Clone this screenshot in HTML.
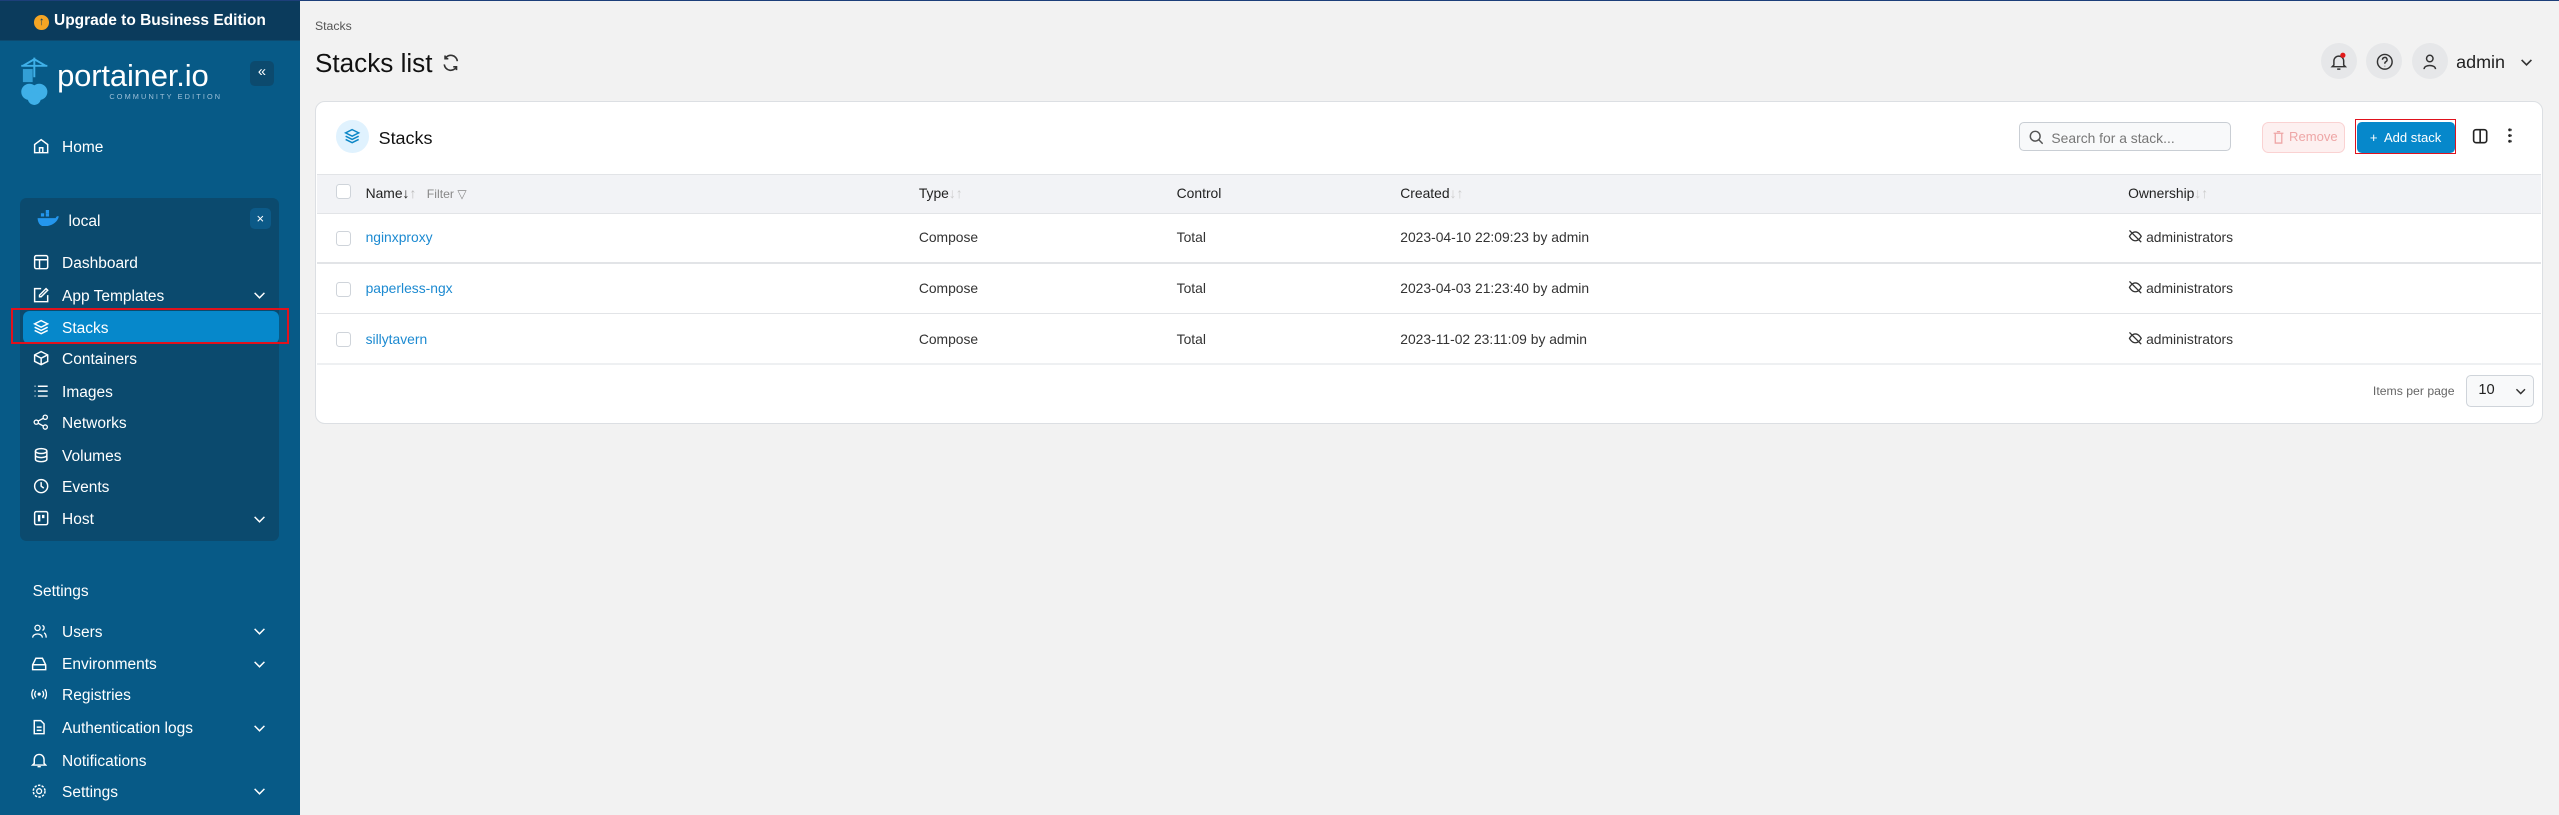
<!DOCTYPE html>
<html><head><meta charset="utf-8"><style>
html,body{margin:0;padding:0;width:2559px;height:815px;overflow:hidden;background:#f2f2f2;font-family:"Liberation Sans",sans-serif}
#w{zoom:1.632;width:1568px;height:500px;position:relative;background:#f2f2f2;border-top:1px solid #1d3f7a;box-sizing:border-box}
.a{position:absolute}
#sb{left:0;top:0;width:184px;height:500px;background:#075a87}
#up{left:0;top:0;width:184px;height:24px;background:#0b3b5c;border-bottom:1px solid #0d4a6f;color:#fff;font-size:9.5px;font-weight:bold;text-align:center;line-height:24px}
.si{position:absolute;left:38px;font-size:9.5px;color:#fff;line-height:12px}
.ic{position:absolute;width:10px;height:10px}
.chev{position:absolute;left:155px;width:8px;height:8px}
#env{left:12px;top:121px;width:159px;height:210px;background:#0b4a6e;border-radius:4px}
.card{left:193px;top:61px;width:1365px;height:198px;background:#fff;border:1px solid #dcdfe3;border-radius:6px;box-sizing:border-box}
.t{position:absolute;font-size:8.5px;color:#333;line-height:10px}
.lnk{color:#1c8ad1}
.cb{position:absolute;left:206px;width:8px;height:8px;border:1px solid #cfd4da;border-radius:2px;background:#fff}
.hr{position:absolute;left:194px;width:1363px;height:1px;background:#e2e4e7}
.circ{position:absolute;width:22px;height:22px;border-radius:50%;background:#e6e7e9}
.eo{display:inline-block;width:9px;height:9px;vertical-align:-1px;margin-right:2px}
</style></head><body><div id="w">
<div id="sb" class="a">
<div id="up" class="a"><span style="display:inline-block;width:9px;height:9px;border-radius:50%;background:#f5a524;color:#0b3b5c;font-size:7px;line-height:9px;vertical-align:0px;margin-right:3px">↑</span>Upgrade to Business Edition</div>
<svg class="a" style="left:11px;top:34px" width="22" height="30" viewBox="0 0 22 30"><path d="M10 1v12M2 6h16M10 2l-7 4M10 2l7 4" stroke="#3fb0e8" stroke-width="1.2" fill="none"/><rect x="3" y="8" width="6" height="8" fill="#3fb0e8" opacity=".8"/><circle cx="7" cy="22" r="5" fill="#3fb0e8"/><circle cx="13" cy="22" r="5" fill="#3fb0e8"/><circle cx="10" cy="26" r="4" fill="#3fb0e8"/></svg>
<div class="a" style="left:35px;top:35px;font-size:19px;color:#fff;letter-spacing:-.1px">portainer.io</div>
<div class="a" style="left:67px;top:56px;font-size:4.5px;color:#9dc0d8;letter-spacing:1.3px">COMMUNITY EDITION</div>
<div class="a" style="left:153px;top:37px;width:15px;height:15px;background:#0c4a6e;border-radius:3px;color:#fff;font-size:9px;text-align:center;line-height:14px">«</div>
<svg class="ic" style="left:20px;top:84px" viewBox="0 0 10 10"><path d="M1 9V4l4-3 4 3v5zM4 9V6h2v3" stroke="#fff" fill="none" stroke-width=".9"/></svg>
<div class="si" style="top:84px">Home</div>
<div id="env" class="a"></div>
<svg class="a" style="left:22px;top:128px" width="14" height="10" viewBox="0 0 14 10"><path d="M1 5h11c1-2 2-1 2-1-1 4-5 6-9 6-3 0-4-3-4-5z" fill="#2496ed"/><rect x="3" y="2" width="2" height="2" fill="#2496ed"/><rect x="6" y="2" width="2" height="2" fill="#2496ed"/><rect x="6" y="0" width="2" height="2" fill="#2496ed"/></svg>
<div class="si" style="top:129px;left:42px">local</div>
<div class="a" style="left:153px;top:127px;width:13px;height:13px;background:#0c5a88;border-radius:3px;color:#fff;font-size:8px;text-align:center;line-height:13px">×</div>
<div class="a" style="left:14px;top:190px;width:157px;height:20px;background:#0688cb;border-radius:4px"></div>
<div class="a" style="left:7px;top:188px;width:170px;height:22px;border:1.5px solid #e0121d;box-sizing:border-box"></div>
<svg class="ic" style="left:20px;top:155px" viewBox="0 0 10 10"><rect x="1" y="1" width="8" height="8" rx="1" stroke="#fff" fill="none" stroke-width=".9"/><path d="M1 3.5h8M4 3.5V9" stroke="#fff" stroke-width=".9"/></svg>
<div class="si" style="top:155px">Dashboard</div>
<svg class="ic" style="left:20px;top:175px" viewBox="0 0 10 10"><path d="M5 1H1v8h8V5M8 1l1 1-4 4H4V5z" stroke="#fff" fill="none" stroke-width=".9"/></svg>
<div class="si" style="top:175px">App Templates</div>
<svg class="chev" style="top:176px" viewBox="0 0 8 8"><path d="M1 3l3 3 3-3" stroke="#fff" fill="none" stroke-width=".9"/></svg>
<svg class="ic" style="left:20px;top:195px" viewBox="0 0 10 10"><path d="M5 1l4 2-4 2-4-2zM1 5l4 2 4-2M1 7l4 2 4-2" stroke="#fff" fill="none" stroke-width=".9"/></svg>
<div class="si" style="top:195px">Stacks</div>
<svg class="ic" style="left:20px;top:214px" viewBox="0 0 10 10"><path d="M5 1l4 2v4L5 9 1 7V3zM1 3l4 2 4-2M5 5v4" stroke="#fff" fill="none" stroke-width=".9"/></svg>
<div class="si" style="top:214px">Containers</div>
<svg class="ic" style="left:20px;top:234px" viewBox="0 0 10 10"><path d="M3 2h6M3 5h6M3 8h6M1 2h.5M1 5h.5M1 8h.5" stroke="#fff" fill="none" stroke-width=".9"/></svg>
<div class="si" style="top:234px">Images</div>
<svg class="ic" style="left:20px;top:253px" viewBox="0 0 10 10"><circle cx="7.5" cy="2" r="1.3" stroke="#fff" fill="none" stroke-width=".8"/><circle cx="2" cy="5" r="1.3" stroke="#fff" fill="none" stroke-width=".8"/><circle cx="7.5" cy="8" r="1.3" stroke="#fff" fill="none" stroke-width=".8"/><path d="M3 4.4l3.4-1.8M3 5.6l3.4 1.8" stroke="#fff" stroke-width=".8"/></svg>
<div class="si" style="top:253px">Networks</div>
<svg class="ic" style="left:20px;top:273px" viewBox="0 0 10 10"><ellipse cx="5" cy="2.5" rx="3.5" ry="1.5" stroke="#fff" fill="none" stroke-width=".9"/><path d="M1.5 2.5v5c0 2 7 2 7 0v-5M1.5 5c0 2 7 2 7 0" stroke="#fff" fill="none" stroke-width=".9"/></svg>
<div class="si" style="top:273px">Volumes</div>
<svg class="ic" style="left:20px;top:292px" viewBox="0 0 10 10"><circle cx="5" cy="5" r="4" stroke="#fff" fill="none" stroke-width=".9"/><path d="M5 2.5V5l1.6 1.2" stroke="#fff" fill="none" stroke-width=".9"/></svg>
<div class="si" style="top:292px">Events</div>
<svg class="ic" style="left:20px;top:312px" viewBox="0 0 10 10"><rect x="1" y="1" width="8" height="8" rx="1" stroke="#fff" fill="none" stroke-width=".9"/><rect x="3" y="3" width="1.5" height="4" fill="#fff"/><rect x="5.5" y="3" width="1.5" height="2" fill="#fff"/></svg>
<div class="si" style="top:312px">Host</div>
<svg class="chev" style="top:313px" viewBox="0 0 8 8"><path d="M1 3l3 3 3-3" stroke="#fff" fill="none" stroke-width=".9"/></svg>
<div class="si" style="top:356px;left:20px">Settings</div>
<svg class="ic" style="left:19px;top:381px" viewBox="0 0 10 10"><circle cx="4" cy="3" r="1.6" stroke="#fff" fill="none" stroke-width=".8"/><path d="M1 9c0-3 6-3 6 0M7 1.5a1.6 1.6 0 010 3M8 6c1 .5 1.3 1.5 1.3 3" stroke="#fff" fill="none" stroke-width=".8"/></svg>
<div class="si" style="top:381px">Users</div>
<svg class="chev" style="top:382px" viewBox="0 0 8 8"><path d="M1 3l3 3 3-3" stroke="#fff" fill="none" stroke-width=".9"/></svg>
<svg class="ic" style="left:19px;top:401px" viewBox="0 0 10 10"><path d="M1 6l2-4h4l2 4v3H1zM1 6h8" stroke="#fff" fill="none" stroke-width=".9"/></svg>
<div class="si" style="top:401px">Environments</div>
<svg class="chev" style="top:402px" viewBox="0 0 8 8"><path d="M1 3l3 3 3-3" stroke="#fff" fill="none" stroke-width=".9"/></svg>
<svg class="ic" style="left:19px;top:420px" viewBox="0 0 10 10"><circle cx="5" cy="5" r="1" fill="#fff"/><path d="M3 3a3 3 0 000 4M7 3a3 3 0 010 4M1.5 2a5 5 0 000 6M8.5 2a5 5 0 010 6" stroke="#fff" fill="none" stroke-width=".8"/></svg>
<div class="si" style="top:420px">Registries</div>
<svg class="ic" style="left:19px;top:440px" viewBox="0 0 10 10"><path d="M2 1h4l2 2v6H2zM3.5 5h3M3.5 7h3" stroke="#fff" fill="none" stroke-width=".9"/></svg>
<div class="si" style="top:440px">Authentication logs</div>
<svg class="chev" style="top:441px" viewBox="0 0 8 8"><path d="M1 3l3 3 3-3" stroke="#fff" fill="none" stroke-width=".9"/></svg>
<svg class="ic" style="left:19px;top:460px" viewBox="0 0 10 10"><path d="M2 7V4.5a3 3 0 016 0V7l1 1H1zM4 9h2" stroke="#fff" fill="none" stroke-width=".9"/></svg>
<div class="si" style="top:460px">Notifications</div>
<svg class="ic" style="left:19px;top:479px" viewBox="0 0 10 10"><circle cx="5" cy="5" r="1.5" stroke="#fff" fill="none" stroke-width=".8"/><circle cx="5" cy="5" r="3.6" stroke="#fff" fill="none" stroke-width=".9" stroke-dasharray="1.5 .8"/></svg>
<div class="si" style="top:479px">Settings</div>
<svg class="chev" style="top:480px" viewBox="0 0 8 8"><path d="M1 3l3 3 3-3" stroke="#fff" fill="none" stroke-width=".9"/></svg>
</div>

<div class="a" style="left:193px;top:11px;font-size:7.5px;color:#555">Stacks</div>
<div class="a" style="left:193px;top:29px;font-size:16px;color:#111">Stacks list</div>
<svg class="a" style="left:270px;top:32px" width="12" height="12" viewBox="0 0 12 12"><path d="M10 5a4 4 0 00-7.5-1.5M2 7a4 4 0 007.5 1.5M2.5 1.5v2h2M9.5 10.5v-2h-2" stroke="#333" fill="none" stroke-width="1"/></svg>
<div class="circ" style="left:1422px;top:26px"></div>
<svg class="a" style="left:1427px;top:31px" width="12" height="12" viewBox="0 0 12 12"><path d="M3 8V5.5a3 3 0 016 0V8l1 1H2zM5 10.5h2" stroke="#333" fill="none" stroke-width=".9"/><circle cx="8.5" cy="2" r="1.6" fill="#e21b1b"/></svg>
<div class="circ" style="left:1450px;top:26px"></div>
<svg class="a" style="left:1455px;top:31px" width="12" height="12" viewBox="0 0 12 12"><circle cx="6" cy="6" r="4.5" stroke="#333" fill="none" stroke-width=".9"/><path d="M4.6 4.8a1.4 1.4 0 112 1.2c-.6.3-.6.6-.6 1.2M6 8.5v.2" stroke="#333" fill="none" stroke-width=".9"/></svg>
<div class="circ" style="left:1478px;top:26px"></div>
<svg class="a" style="left:1483px;top:31px" width="12" height="12" viewBox="0 0 12 12"><circle cx="6" cy="4" r="2" stroke="#333" fill="none" stroke-width=".9"/><path d="M2.5 10.5c0-3 7-3 7 0" stroke="#333" fill="none" stroke-width=".9"/></svg>
<div class="a" style="left:1505px;top:31px;font-size:11px;color:#222">admin</div>
<svg class="a" style="left:1544px;top:33px" width="8" height="8" viewBox="0 0 8 8"><path d="M1 3l3 3 3-3" stroke="#333" fill="none" stroke-width="1"/></svg>

<div class="a card"></div>
<div class="a" style="left:206px;top:73px;width:20px;height:20px;border-radius:50%;background:#e0f2fe"></div>
<svg class="a" style="left:211px;top:78px" width="10" height="10" viewBox="0 0 10 10"><path d="M5 1l4 2-4 2-4-2zM1 5l4 2 4-2M1 7l4 2 4-2" stroke="#0b86c6" fill="none" stroke-width=".9"/></svg>
<div class="a" style="left:232px;top:78px;font-size:11px;color:#111">Stacks</div>
<div class="a" style="left:1237px;top:74px;width:130px;height:18px;border:1px solid #c9ced4;border-radius:3px;background:#f8f9fa;box-sizing:border-box"></div>
<svg class="a" style="left:1243px;top:79px" width="9" height="9" viewBox="0 0 9 9"><circle cx="3.8" cy="3.8" r="3" stroke="#555" fill="none" stroke-width=".9"/><path d="M6 6l2.4 2.4" stroke="#555" stroke-width=".9"/></svg>
<div class="a" style="left:1257px;top:79px;font-size:8.5px;color:#777">Search for a stack...</div>
<div class="a" style="left:1386px;top:74px;width:51px;height:19px;border:1px solid #fad2d2;border-radius:4px;background:#fdf0f0;box-sizing:border-box;font-size:8px;color:#eea6a6;line-height:17px;padding-left:16px">Remove</div>
<svg class="a" style="left:1392px;top:79px" width="8" height="9" viewBox="0 0 8 9"><path d="M1 2h6M3 1h2M2 2v6h4V2" stroke="#eea6a6" fill="none" stroke-width=".8"/></svg>
<div class="a" style="left:1444px;top:74px;width:60px;height:19px;background:#0688cb;border-radius:3px;color:#fff;font-size:8px;line-height:19px;text-align:center">+&nbsp; Add stack</div>
<div class="a" style="left:1443px;top:72px;width:62px;height:22px;border:1.2px solid #e0121d;box-sizing:border-box"></div>
<svg class="a" style="left:1515px;top:78px" width="10" height="10" viewBox="0 0 10 10"><rect x="1" y="1" width="8" height="8" rx="1.5" stroke="#222" fill="none" stroke-width="1"/><path d="M5 1v8" stroke="#222"/></svg>
<div class="a" style="left:1537px;top:77px;width:2px;height:10px;background:radial-gradient(circle,#222 .8px,transparent 1px) 0 0/2px 3.5px"></div>

<div class="a" style="left:194px;top:106px;width:1363px;height:23px;background:#f2f3f6;border-top:1px solid #e2e4e7;border-bottom:1px solid #e2e4e7"></div>
<div class="cb" style="top:112px"></div>
<div class="t" style="left:224px;top:113px;color:#222">Name<b>↓</b><span style="color:#bbb">↑</span> <span style="color:#888;font-size:7.5px;margin-left:4px">Filter ▽</span></div>
<div class="t" style="left:563px;top:113px;color:#222">Type<span style="color:#ccc">↓↑</span></div>
<div class="t" style="left:721px;top:113px;color:#222">Control</div>
<div class="t" style="left:858px;top:113px;color:#222">Created<span style="color:#ccc">↓↑</span></div>
<div class="t" style="left:1304px;top:113px;color:#222">Ownership<span style="color:#ccc">↓↑</span></div>

<div class="cb" style="top:141px"></div>
<div class="t lnk" style="left:224px;top:140px">nginxproxy</div>
<div class="t" style="left:563px;top:140px">Compose</div><div class="t" style="left:721px;top:140px">Total</div>
<div class="t" style="left:858px;top:140px">2023-04-10 22:09:23 by admin</div>
<div class="t" style="left:1304px;top:140px"><svg class="eo" viewBox="0 0 10 10"><path d="M1 5s1.5-3 4-3 4 3 4 3-1.5 3-4 3-4-3-4-3zM1 1l8 8" stroke="#333" fill="none" stroke-width=".9"/></svg>administrators</div>
<div class="hr" style="top:160px"></div>
<div class="cb" style="top:172px"></div>
<div class="t lnk" style="left:224px;top:171px">paperless-ngx</div>
<div class="t" style="left:563px;top:171px">Compose</div><div class="t" style="left:721px;top:171px">Total</div>
<div class="t" style="left:858px;top:171px">2023-04-03 21:23:40 by admin</div>
<div class="t" style="left:1304px;top:171px"><svg class="eo" viewBox="0 0 10 10"><path d="M1 5s1.5-3 4-3 4 3 4 3-1.5 3-4 3-4-3-4-3zM1 1l8 8" stroke="#333" fill="none" stroke-width=".9"/></svg>administrators</div>
<div class="hr" style="top:191px"></div>
<div class="cb" style="top:203px"></div>
<div class="t lnk" style="left:224px;top:202px">sillytavern</div>
<div class="t" style="left:563px;top:202px">Compose</div><div class="t" style="left:721px;top:202px">Total</div>
<div class="t" style="left:858px;top:202px">2023-11-02 23:11:09 by admin</div>
<div class="t" style="left:1304px;top:202px"><svg class="eo" viewBox="0 0 10 10"><path d="M1 5s1.5-3 4-3 4 3 4 3-1.5 3-4 3-4-3-4-3zM1 1l8 8" stroke="#333" fill="none" stroke-width=".9"/></svg>administrators</div>
<div class="hr" style="top:222px;background:#eef0f2"></div>
<div class="t" style="left:1454px;top:234px;font-size:7.5px;color:#666">Items per page</div>
<div class="a" style="left:1511px;top:229px;width:42px;height:20px;border:1px solid #cfd4da;border-radius:3px;background:#f8f9fa;box-sizing:border-box;font-size:9px;color:#222;line-height:18px;padding-left:7px">10</div>
<svg class="a" style="left:1541px;top:235px" width="7" height="7" viewBox="0 0 8 8"><path d="M1 3l3 3 3-3" stroke="#333" fill="none" stroke-width="1"/></svg>
</div></body></html>
